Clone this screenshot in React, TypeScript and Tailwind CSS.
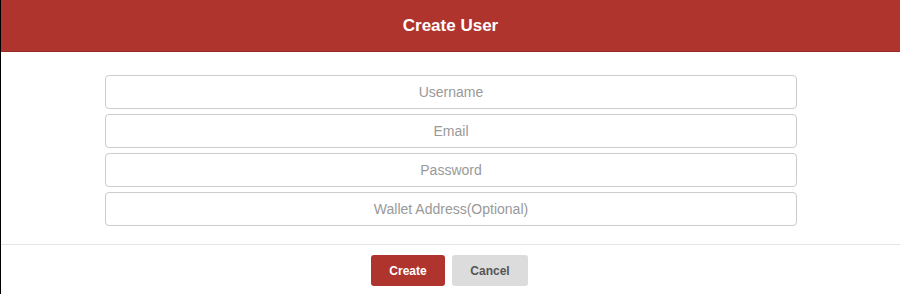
import React from 'react';

export default function App() {
    const fields = ['Username', 'Email', 'Password', 'Wallet Address(Optional)'];

    return (
        <div className="w-[900px] h-[294px] bg-white border-l border-black font-['Liberation_Sans',Arial,sans-serif] flex flex-col overflow-hidden">
            <div className="h-[52px] bg-[#b0342e] border-b border-[#9a2c27] flex items-center justify-center">
                <h1 className="text-white text-[17px] font-bold">Create User</h1>
            </div>

            <div className="pl-[104px] pr-[103px] pt-[23px] flex flex-col gap-[5px]">
                {fields.map((f) => (
                    <input
                        key={f}
                        type={f === 'Password' ? 'password' : 'text'}
                        placeholder={f}
                        className="h-[34px] w-full rounded-[4px] border border-[#cccccc] text-center text-[14px] text-[#555] placeholder:text-[#999] outline-none"
                    />
                ))}
            </div>

            <div className="mt-[18px] border-t border-[#e5e5e5] flex justify-center gap-[7px] pt-[10px] pr-[2px]">
                <button className="w-[74px] h-[31px] rounded-[3px] bg-[#b0342e] text-white text-[12px] font-bold">Create</button>
                <button className="w-[76px] h-[31px] rounded-[3px] bg-[#dcdcdc] text-[#555] text-[12px] font-bold">Cancel</button>
            </div>
        </div>
    );
}
